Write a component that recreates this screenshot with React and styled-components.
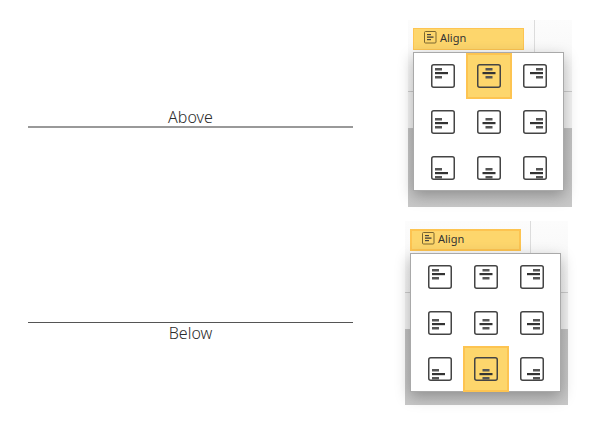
import React from 'react';
import styled, { createGlobalStyle } from 'styled-components';

const GlobalStyle = createGlobalStyle`
    html, body {
        margin: 0;
        padding: 0;
        background: #ffffff;
    }
`;

const Page = styled.div`
    width: 600px;
    height: 425px;
    padding-top: 20px;
    box-sizing: border-box;
    overflow: hidden;
    font-family: "Noto Sans", sans-serif;
`;

const Row = styled.section`
    display: flex;
    height: ${props => props.$height}px;
`;

const CaptionColumn = styled.div`
    width: 325px;
    height: ${props => props.$height}px;
    margin-left: 28px;
    display: flex;
    flex-direction: column;
    justify-content: flex-start;
    padding-top: ${props => props.$top}px;
    box-sizing: border-box;
`;

const Caption = styled.div`
    font-size: 16px;
    font-weight: 300;
    line-height: ${props => props.$lineHeight}px;
    color: #2b2b2b;
    text-align: center;
`;

const Rule = styled.div`
    height: ${props => props.$thick}px;
    background: ${props => props.$color};
`;

const Shot = styled.div`
    position: relative;
    width: ${props => props.$width}px;
    height: ${props => props.$height}px;
    margin-left: ${props => props.$offset}px;
    display: flex;
    flex-direction: column;
`;

const ToolbarBand = styled.div`
    height: 71px;
    border-bottom: 1px solid #cdcdcd;
    background: linear-gradient(#fcfcfc, #f5f5f5);
    display: flex;
    justify-content: flex-end;
`;

const ToolbarDivider = styled.div`
    width: 1px;
    height: 32px;
    margin-right: 37px;
    background: #dcdcdc;
`;

const LowerBand = styled.div`
    height: 36px;
    background: #f3f3f3;
    border-bottom: 1px solid #c4c4c4;
`;

const GreyBand = styled.div`
    flex: 1;
    background: linear-gradient(#c2c2c2, #c8c8c8);
`;

const Overlay = styled.div`
    position: absolute;
    left: 5px;
    top: 8px;
    width: 151px;
`;

const AlignButton = styled.div`
    width: 111px;
    height: 22px;
    box-sizing: border-box;
    margin-bottom: 2px;
    padding: 0 0 3px 10px;
    display: flex;
    align-items: center;
    gap: 3px;
    background: #fdd66c;
    border: ${props => props.$thick ? 2 : 1}px solid #fdc451;
    font-size: 11px;
    color: #333333;
`;

const Popover = styled.div`
    height: 139px;
    box-sizing: border-box;
    padding-right: 5px;
    padding-left: 6px;
    display: grid;
    grid-template-columns: repeat(3, 46px);
    grid-auto-rows: 46px;
    background: #ffffff;
    border: 1px solid #a9a9a9;
    box-shadow: 0 5px 14px rgba(0, 0, 0, 0.28);
`;

const Cell = styled.div`
    display: flex;
    align-items: center;
    justify-content: center;
    box-sizing: border-box;
    background: ${props => props.$active ? '#fdd66c' : 'transparent'};
    border: ${props => props.$active ? '2px solid #fdc451' : 'none'};
`;

const barX = (align, width) => {
    if (align === 'left') {
        return 4;
    }
    return align === 'center' ? 12 - width / 2 : 20 - width;
};

const AlignIcon = ({ align, valign }) => {
    const top = { top: 4, middle: 8, bottom: 12 }[valign];
    return (
        <svg width="24" height="24" viewBox="0 0 24 24">
            <rect x="0.75" y="0.75" width="22.5" height="22.5" rx="2" fill="none" stroke="#444444" strokeWidth="1.5" />
            <rect x={barX(align, 7)} y={top} width="7" height="2.5" fill="#555555" />
            <rect x={barX(align, 13)} y={top + 4} width="13" height="2.2" fill="#333333" />
            <rect x={barX(align, 7)} y={top + 8} width="7" height="2.5" fill="#555555" />
        </svg>
    );
};

const ButtonIcon = () => (
    <svg width="13" height="13" viewBox="0 0 13 13">
        <rect x="0.5" y="0.5" width="11.5" height="11.5" rx="1" fill="none" stroke="#7a6630" />
        <rect x="3" y="3" width="4" height="1.2" fill="#444444" />
        <rect x="3" y="5.5" width="6.5" height="1.2" fill="#333333" />
        <rect x="3" y="8" width="4" height="1.2" fill="#444444" />
    </svg>
);

const ALIGNS = ['left', 'center', 'right'];
const VALIGNS = ['top', 'middle', 'bottom'];

const AlignShot = ({ width, height, offset, activeAlign, activeValign, thick }) => (
    <Shot $width={width} $height={height} $offset={offset}>
        <ToolbarBand>
            <ToolbarDivider />
        </ToolbarBand>
        <LowerBand />
        <GreyBand />
        <Overlay>
            <AlignButton $thick={thick}>
                <ButtonIcon />
                Align
            </AlignButton>
            <Popover>
                {VALIGNS.map(valign => ALIGNS.map(align => (
                    <Cell
                        key={`${valign}-${align}`}
                        $active={align === activeAlign && valign === activeValign}
                    >
                        <AlignIcon align={align} valign={valign} />
                    </Cell>
                )))}
            </Popover>
        </Overlay>
    </Shot>
);

const App = () => (
    <Page>
        <GlobalStyle />
        <Row $height={201}>
            <CaptionColumn $height={201} $top={88}>
                <Caption $lineHeight={18}>Above</Caption>
                <Rule $thick={2} $color="#999999" />
            </CaptionColumn>
            <AlignShot width={164} height={187} offset={55} activeAlign="center" activeValign="top" />
        </Row>
        <Row $height={184}>
            <CaptionColumn $height={184} $top={101}>
                <Rule $thick={1} $color="#555555" />
                <Caption $lineHeight={20}>Below</Caption>
            </CaptionColumn>
            <AlignShot width={163} height={184} offset={52} activeAlign="center" activeValign="bottom" thick />
        </Row>
    </Page>
);

export default App;
